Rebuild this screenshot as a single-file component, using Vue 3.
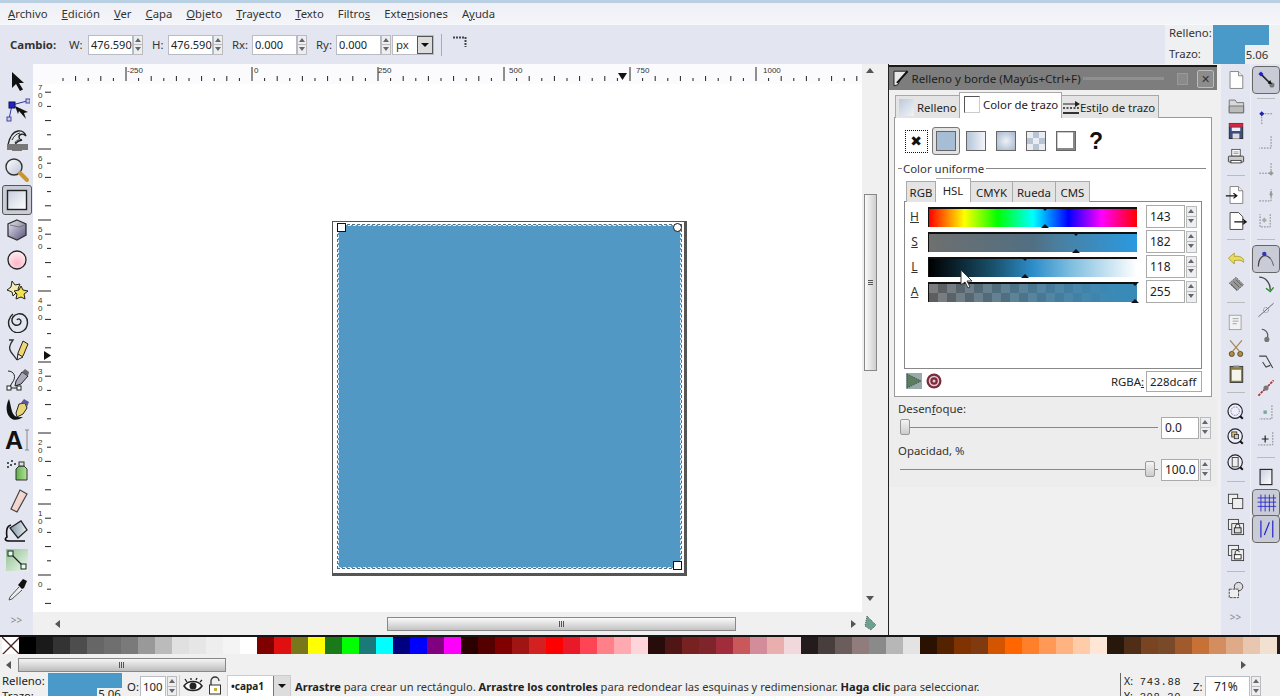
<script setup>
import { computed } from 'vue'

const menus = [
  ['A', 'rchivo'], ['E', 'dición'], ['V', 'er'], ['C', 'apa'], ['O', 'bjeto'],
  ['T', 'rayecto'], ['T', 'exto'], ['Filtro', 's', ''], ['Exte', 'n', 'siones'], ['A', 'y', 'uda'],
]

const fields = [
  { label: 'W:', value: '476.590', cls: 'f-w' },
  { label: 'H:', value: '476.590', cls: 'f-h' },
  { label: 'Rx:', value: '0.000', cls: 'f-rx' },
  { label: 'Ry:', value: '0.000', cls: 'f-ry' },
]

const tools = [
  `<path d="M8 5v16l4-4 4 7 3-1.5-4-6.5h5z" fill="#111"/>`,
  `<path d="M8 8L23 4M8 8L5 22" stroke="#33a" fill="none"/><rect x="5" y="5" width="6" height="6" fill="#22c" stroke="#114"/><rect x="22" y="2" width="4" height="4" fill="#ccd" stroke="#44a"/><rect x="3" y="20" width="4" height="4" fill="#ccd" stroke="#44a"/><path d="M11 9l13 6-4 1 2 6-7-8-1 3z" fill="#111"/>`,
  `<path d="M4 18c1-5 3-13 10-14 4-.6 7 2 8 5-3-3-7-2-7 1 0 2 2 3 3 3-4 1-6 2-7 5z" fill="#e4e6ee" stroke="#222" stroke-width="1.300"/><path d="M8 13c2-4 4-6 8-7M11 16c1-2 2-3 4-3" fill="none" stroke="#222"/><rect x="3" y="17" width="21" height="6" fill="#777"/><rect x="8" y="22" width="10" height="2" fill="#777"/>`,
  `<circle cx="10" cy="10" r="8" fill="url(#gGlass)" stroke="#333" stroke-width="1.4"/><path d="M16 16l7 7" stroke="#c9962e" stroke-width="4" stroke-linecap="round"/>`,
  `<rect x="3.5" y="3.5" width="19" height="19" fill="url(#gRect)" stroke="#222" stroke-width="1.4"/>`,
  `<path d="M13 3l9 4v11l-9 5-9-4V7z" fill="url(#gBox)" stroke="#333" stroke-width="1.3"/><path d="M6 8l9 2 6-2" fill="none" stroke="#777"/>`,
  `<circle cx="13" cy="13" r="9" fill="url(#gPink)" stroke="#222" stroke-width="1.3"/>`,
  `<path d="M8 4l3 4 5-1-2 5 3 4-5 0-3 3-1-4-5-2 4-3z" fill="#f3ecb0" stroke="#222"/><path d="M17 9l2 4 5 1-4 3 1 5-4-2-5 2 1-5-3-3 5-1z" fill="#f4e04a" stroke="#222"/>`,
  `<path d="M13 13c1-2 4-1 4 1.500s-3 4.500-6 3.500-4-5-2-8 8-5 12-1 3 12-2 15-10 2-13-3-1-11 3-14" fill="none" stroke="#222" stroke-width="1.400"/>`,
  `<path d="M5 3h4c-3 4-5 8-2 12s5 6 6 8" fill="none" stroke="#333" stroke-width="1.300"/><path d="M14 16l5-12 5 3-5 12-5 3z" fill="#f0d870" stroke="#222"/><path d="M13 23l1-6 5 3z" fill="#eee" stroke="#222"/>`,
  `<path d="M4 4c6 0 9 6 4 12l-3 5h9" fill="none" stroke="#222"/><rect x="3" y="19" width="4" height="4" fill="#fff" stroke="#222"/><rect x="13" y="19" width="4" height="4" fill="#fff" stroke="#222"/><path d="M12 14l6-9 6 4-7 8-6 2z" fill="#aab" stroke="#222"/><path d="M18 5l6 4 1-4-4-3z" fill="#666"/>`,
  `<path d="M5 2c-4 7-3 17 3 20 4 2 8 0 11-2-3 0-7 1-9-2-3-4-3-10-5-16z" fill="#111"/><path d="M12 16l3-9 6-1 2 5-4 6-6 3z" fill="#e8d676" stroke="#222"/><path d="M16 7l5-1 2 4 2-5-5-3z" fill="#5a5a9a"/>`,
  `<text x="1" y="22" font-size="25" font-weight="700" fill="#111" font-family="Liberation Sans">A</text><path d="M21 3h4M23 3v20M21 23h4" stroke="#888" fill="none"/>`,
  `<g fill="#222"><circle cx="4" cy="6" r="1"/><circle cx="8" cy="4" r="1"/><circle cx="7" cy="8" r="1"/><circle cx="11" cy="7" r="1"/><circle cx="4" cy="10" r="1"/></g><path d="M12 23V12l3-3h5l3 3v11z" fill="url(#gGreen)" stroke="#333"/><rect x="15" y="5" width="5" height="4" fill="#ddd" stroke="#333"/>`,
  `<path d="M7 22L16 3l7 4-10 18z" fill="url(#gErase)" stroke="#444" stroke-width="1.2"/>`,
  `<path d="M7 8C2 9 2 14 3 20c-3 2-2 4 3 4h15" fill="none" stroke="#111" stroke-width="1.600"/><path d="M6 11l11-7 6 9-9 8z" fill="url(#gBucket)" stroke="#222" stroke-width="1.300"/>`,
  `<rect x="2" y="2" width="22" height="22" fill="url(#gGrad)"/><path d="M7 7l12 12" stroke="#222" stroke-width="1.3"/><rect x="4" y="4" width="5" height="5" fill="#dfe" stroke="#222"/><rect x="17" y="17" width="5" height="5" fill="#dfe" stroke="#222"/>`,
  `<path d="M15 10l-9 10-1 3 3-1 10-9" fill="#eee" stroke="#555"/><path d="M14 8l5-6 4 2-3 7-2 1z" fill="#111"/>`,
]

const sep = null
const doc = `<path d="M6 3h10l5 5v15H6z" fill="#fff" stroke="#777"/><path d="M16 3v5h5" fill="#eee" stroke="#777"/>`
const zoomBase = `<circle cx="12" cy="12" r="8.5" fill="#eef" stroke="#222" stroke-width="1.4"/><path d="M18 18l3 3" stroke="#111" stroke-width="2.4"/>`
const col1 = [
  doc,
  `<path d="M5 6h7l2 3h8v12H5z" fill="#d8d8d8" stroke="#666"/><path d="M5 13h17v8H5z" fill="#bbb" stroke="#666"/>`,
  `<rect x="5" y="4" width="16" height="18" fill="#3d4f80" stroke="#222"/><rect x="5" y="4" width="16" height="4" fill="#d9243c"/><rect x="8" y="9" width="10" height="4" fill="#eef"/><rect x="9" y="16" width="8" height="6" fill="#ddd"/>`,
  `<rect x="8" y="4" width="10" height="8" fill="#fff" stroke="#444"/><path d="M10 7h6M10 9h6" stroke="#888"/><rect x="4" y="12" width="18" height="7" rx="1" fill="#ccc" stroke="#333"/><rect x="7" y="17" width="12" height="3" fill="#fff" stroke="#333"/>`,
  sep,
  doc + `<path d="M1 14h12M10 11l4 3-4 3" fill="none" stroke="#111" stroke-width="1.4"/>`,
  `<path d="M6 3h10l5 5v15H6z" fill="#fff" stroke="#333"/><path d="M11 14h13M21 11l4 3-4 3" fill="none" stroke="#111" stroke-width="1.4"/>`,
  sep,
  `<path d="M4 12l7-6v4c6-1 12 1 11 7-2-3-6-3-11-2v4z" fill="#e9dc5c" stroke="#aa9a30"/>`,
  `<path d="M5 12l8-7 9 9-8 7z" fill="#999" stroke="#666" stroke-dasharray="2 1"/><path d="M7 13l7 7M10 10l7 7M13 8l7 7" stroke="#555"/>`,
  sep,
  `<rect x="5" y="5" width="14" height="17" fill="#f1f2f4" stroke="#999"/><path d="M9 9h7M9 12h7M9 15h5" stroke="#999"/>`,
  `<circle cx="8" cy="20" r="3" fill="#b38d3a" stroke="#443"/><circle cx="18" cy="20" r="3" fill="#b38d3a" stroke="#443"/><path d="M9 17L20 4M17 17L6 4" stroke="#a85" stroke-width="1.5"/>`,
  `<rect x="6" y="4" width="15" height="19" fill="#8a7a40" stroke="#333"/><rect x="8" y="8" width="11" height="13" fill="#f5f5ea"/><rect x="10" y="3" width="7" height="3" fill="#888"/>`,
  sep,
  zoomBase + `<circle cx="12" cy="12" r="5" fill="none" stroke="#555" stroke-dasharray="1 1"/>`,
  zoomBase + `<rect x="8" y="7" width="6" height="6" fill="#ddc070" stroke="#333"/><rect x="11" y="10" width="5" height="5" fill="#ccc" stroke="#333"/>`,
  zoomBase + `<rect x="8.5" y="6.5" width="7" height="11" fill="#eee" stroke="#333"/>`,
  sep,
  `<rect x="4" y="5" width="11" height="11" fill="#eee" stroke="#333"/><rect x="9" y="10" width="12" height="12" fill="#eee" stroke="#333"/>`,
  `<rect x="4" y="4" width="12" height="12" fill="#eee" stroke="#333"/><rect x="8" y="9" width="14" height="13" fill="#eee" stroke="#333"/><rect x="11" y="14" width="8" height="6" fill="#ddd" stroke="#111"/><path d="M12.5 14v-2a2.5 2.5 0 015 0v2" fill="none" stroke="#111"/>`,
  `<rect x="4" y="4" width="12" height="12" fill="#eee" stroke="#333"/><rect x="8" y="9" width="14" height="13" fill="#eee" stroke="#333"/><rect x="11" y="15" width="8" height="5" fill="#fff" stroke="#111"/><path d="M12 15v-2a2.5 2.5 0 015-1" fill="none" stroke="#111"/>`,
  sep,
  `<circle cx="16" cy="9" r="5" fill="#ddd" stroke="#333"/><rect x="5" y="12" width="11" height="10" fill="#eee" stroke="#333" stroke-dasharray="3 1"/>`,
]

const dash = 'fill="none" stroke="#777" stroke-dasharray="2 1.4"'
const col2 = [
  { b: `<path d="M7 6l12 12" stroke="#222" stroke-width="2"/><path d="M4 6l3-3 3 3-3 3z" fill="#22c"/><circle cx="20" cy="19" r="3" fill="#777"/><path d="M15 17l5 1-2-5z" fill="#111"/>`, on: true },
  sep,
  { b: `<path d="M8 8h13M8 8v13" ${dash}/><path d="M5 8l3-3 3 3-3 3z" fill="#22a"/>` },
  { b: `<path d="M19 5v14H5" ${dash}/>` },
  { b: `<path d="M5 18h14V6" ${dash}/><path d="M16 18l3-3 3 3-3 3z" fill="#999"/>` },
  { b: `<path d="M5 20h14V6" ${dash}/><path d="M17 12l2-4 2 4-2 4z" fill="#999"/>` },
  { b: `<path d="M18 5v15H6V5" ${dash}/><path d="M8 12l3-3 3 3-3 3z" fill="#aaa"/>` },
  sep,
  { b: `<path d="M4 22C4 12 10 5 18 12" fill="none" stroke="#444" stroke-width="1.5"/><circle cx="11" cy="7" r="2.6" fill="#33b"/><path d="M18 12c3 4 3 7 4 9" stroke="#444" fill="none"/>`, on: true },
  { b: `<path d="M5 5c7 0 13 6 13 15" fill="none" stroke="#444" stroke-width="1.5"/><path d="M13 18l5 4 4-5" fill="none" stroke="#2a8a2a" stroke-width="1.6"/>` },
  { b: `<path d="M4 21L22 5" stroke="#555"/><circle cx="13" cy="13" r="3" fill="none" stroke="#555" stroke-dasharray="1 1"/>` },
  { b: `<path d="M8 5c8 1 9 10 4 14" fill="none" stroke="#555" stroke-width="1.4"/><circle cx="14" cy="17" r="3" fill="#777"/>` },
  { b: `<path d="M5 6h8l8 14M9 13l4 6 5-2" fill="none" stroke="#444" stroke-width="1.3"/>` },
  { b: `<path d="M4 22L22 4" stroke="#a33" stroke-dasharray="3 1" stroke-width="2"/><circle cx="13" cy="13" r="3" fill="#777"/>` },
  { b: `<path d="M20 4v16H5" ${dash}/><rect x="10" y="10" width="4" height="4" fill="#7a9"/>` },
  { b: `<path d="M8 13h8M12 9v8" stroke="#222" stroke-width="1.4"/><path d="M21 5v15H4" ${dash}/>` },
  sep,
  { b: `<rect x="6" y="4" width="14" height="18" fill="url(#gRect)" stroke="#222" stroke-width="1.3"/>` },
  { b: `<path d="M7 3v20M12 3v20M17 3v20M22 3v20M3 7h22M3 12h22M3 17h22" stroke="#22c"/>`, on: true },
  { b: `<path d="M7 3v20M21 3v20M11 20L17 5" stroke="#22c" stroke-width="1.4"/>`, on: true },
]

const palette = [
  '#000', '#1a1a1a', '#333', '#4d4d4d', '#666', '#6f6f6f', '#7a7a7a', '#999', '#bbb', '#e0e0e0', '#e6e6e6', '#eee', '#f4f4f4', '#fff',
  '#800000', '#e01010', '#78781a', '#ff0', '#1a7a1a', '#0f0', '#1a7a7a', '#0ff', '#000080', '#00f', '#800080', '#f0f',
  '#2b0000', '#550000', '#800000', '#a01414', '#d42020', '#f00', '#e81a2a', '#ff4455', '#ff8088', '#ffaab0', '#ffd5dc',
  '#280b0b', '#501616', '#782121', '#80242c', '#a02c3c', '#c8585a', '#d38d9a', '#e9afaf', '#f0d8dc',
  '#241c1c', '#483e3e', '#6c5d5d', '#917c7c', '#8a8a8a', '#b7b7b7', '#e3e3e3',
  '#2b1100', '#552200', '#803300', '#803a10', '#d45500', '#f60', '#ff7f2a', '#f95', '#ffb380', '#fca', '#ffe6d5',
  '#28170b', '#502d16', '#784421', '#784a2a', '#a05a2c', '#c87137', '#d38d5f', '#deaa87', '#e9c6af', '#f2e0d0',
]

const channels = [
  { key: 'H', value: 143, cls: 'bar-h', mark: 116 },
  { key: 'S', value: 182, cls: 'bar-s', mark: 147 },
  { key: 'L', value: 118, cls: 'bar-l', mark: 96 },
  { key: 'A', value: 255, cls: 'bar-a', mark: 206 },
]

const colorTabs = ['RGB', 'HSL', 'CMYK', 'Rueda', 'CMS']

const hTicks = computed(() => {
  const out = []
  for (let i = -15; i <= 48; i++) {
    const x = 252 - 33 + i * 12.6
    const m = ((i % 10) + 10) % 10
    out.push({ x, y: m === 0 ? 3 : m % 2 === 1 ? 14 : 12 })
  }
  return out
})
const hLabels = [['-250', 125], ['0', 252], ['250', 376], ['500', 507], ['750', 634], ['1000', 761]]

const vTicks = computed(() => {
  const out = []
  for (let i = -3; i <= 36; i++) {
    const y = 575 - 84 - i * 14.2
    out.push({ y, x: i % 5 === 0 ? 5 : i % 2 === 0 ? 12 : 14 })
  }
  return out
})
const vLabels = [['0', 575], ['100', 504], ['200', 433], ['300', 362], ['400', 291], ['500', 220], ['600', 149], ['700', 78]]
</script>

<template>
  <div class="app">
    <svg class="defs" width="0" height="0">
      <defs>
        <linearGradient id="gGlass" x1="0" y1="0" x2="1" y2="1"><stop offset="0" stop-color="#fff"/><stop offset="1" stop-color="#b8c2d6"/></linearGradient>
        <linearGradient id="gRect" x1="0" y1="0" x2="1" y2="1"><stop offset="0" stop-color="#c6cedd"/><stop offset="1" stop-color="#fff"/></linearGradient>
        <linearGradient id="gBox" x1="0" y1="0" x2="1" y2="1"><stop offset="0" stop-color="#ececf4"/><stop offset="1" stop-color="#55507a"/></linearGradient>
        <radialGradient id="gPink" cx=".5" cy=".7" r=".7"><stop offset="0" stop-color="#ffb4c8"/><stop offset="1" stop-color="#fdf0f4"/></radialGradient>
        <linearGradient id="gGreen" x1="0" y1="0" x2="1" y2="0"><stop offset="0" stop-color="#5db04a"/><stop offset="1" stop-color="#b7e09a"/></linearGradient>
        <linearGradient id="gErase" x1="0" y1="0" x2="1" y2="1"><stop offset="0" stop-color="#f4e8e4"/><stop offset="1" stop-color="#f0c4bc"/></linearGradient>
        <linearGradient id="gBucket" x1="0" y1="0" x2="1" y2="0"><stop offset="0" stop-color="#7f95a3"/><stop offset="1" stop-color="#e8eef2"/></linearGradient>
        <linearGradient id="gGrad" x1="0" y1="0" x2="1" y2="1"><stop offset="0" stop-color="#8fc08f"/><stop offset="1" stop-color="#eef7ee"/></linearGradient>
      </defs>
    </svg>

    <div class="titlestrip" />

    <nav class="menubar">
      <span v-for="m in menus" :key="m.join('')">
        <template v-if="m.length === 2"><u>{{ m[0] }}</u>{{ m[1] }}</template>
        <template v-else>{{ m[0] }}<u>{{ m[1] }}</u>{{ m[2] }}</template>
      </span>
    </nav>

    <div class="controls">
      <strong class="cambio">Cambio:</strong>
      <div v-for="f in fields" :key="f.label" class="field" :class="f.cls">
        <label>{{ f.label }}</label>
        <span class="input">{{ f.value }}</span>
        <span class="spin"><i class="up" /><i class="down" /></span>
      </div>
      <div class="combo"><span>px</span><b class="combo-btn"><i class="tri" /></b></div>
      <span class="vsep" />
      <svg class="corner" width="16" height="12" viewBox="0 0 16 12"><path d="M1 1.500h12M13.500 1v10" stroke="#444" stroke-width="2" stroke-dasharray="2 1" fill="none"/></svg>
      <div class="selstyle">
        <div class="selstyle-labels"><span>Relleno:</span><span>Trazo:</span></div>
        <div class="selstyle-swatch"><span>5.06</span></div>
      </div>
    </div>

    <div class="main">
      <aside class="lefttools">
        <button v-for="(t, i) in tools" :key="i" class="tool" :class="{ on: i === 4 }" type="button">
          <svg width="26" height="26" viewBox="0 0 26 26" v-html="t" />
        </button>
        <span class="more">&gt;&gt;</span>
      </aside>

      <section class="canvas">
        <svg class="ruler-h" width="829" height="20">
          <line v-for="t in hTicks" :key="t.x" :x1="t.x" :x2="t.x" :y1="t.y" y2="17" stroke="#222" />
          <text v-for="l in hLabels" :key="l[0]" :x="l[1] - 33 + 2" y="9" class="rtext">{{ l[0] }}</text>
          <path d="M585 9h9l-4.500 7z" fill="#111" />
        </svg>
        <svg class="ruler-v" width="19" height="528">
          <line v-for="t in vTicks" :key="t.y" :x1="t.x" x2="18" :y1="t.y" :y2="t.y" stroke="#222" />
          <g v-for="l in vLabels" :key="l[0]">
            <text v-for="(d, i) in l[0]" :key="i" x="5" :y="l[1] - 84 + 12 + i * 8.4" class="rtext">{{ d }}</text>
          </g>
          <path d="M11 267l7 4.500-7 4.500z" fill="#111" />
        </svg>
        <div class="drawing">
          <div class="page">
            <div class="shape"><div class="ants" /></div>
            <i class="handle h-tl" />
            <i class="handle h-tr" />
            <i class="handle h-br" />
          </div>
        </div>
        <div class="vscroll">
          <i class="arr arr-up" />
          <div class="thumb-v" />
          <i class="arr arr-down" />
        </div>
        <div class="hscroll">
          <i class="arr arr-left" />
          <div class="thumb-h" />
          <i class="arr arr-right" />
        </div>
        <div class="cms">
          <svg width="16" height="16" viewBox="0 0 16 16"><path d="M5 1l9 9-5 5-6-4z" fill="#6f9f8f" stroke="#4a6a5a" stroke-dasharray="1 1"/></svg>
        </div>
      </section>

      <section class="dock">
        <header class="dock-title">
          <svg width="17" height="17" viewBox="0 0 17 17"><path d="M1 1h14L8 9l-3 6-4 1z" fill="#e8e8e8" stroke="#222"/><path d="M15 1L6 11l-2 2" stroke="#111" stroke-width="2"/></svg>
          <span class="dock-name">Relleno y borde (Mayús+Ctrl+F)</span>
          <span class="dock-grip" />
          <span class="dock-min"><i /></span>
          <span class="dock-close">✕</span>
        </header>
        <div class="tabs">
          <span class="tab t-fill"><i class="tab-swatch" /><span>Relleno</span></span>
          <span class="tab t-stroke active"><i class="tab-empty" /><span>Color de <u>t</u>razo</span></span>
          <span class="tab t-style">
            <svg width="17" height="18" viewBox="0 0 17 18"><path d="M0 6h13" stroke="#222"/><path d="M12 3l5 3-5 3z" fill="#222"/><path d="M0 10h16" stroke="#222" stroke-width="1.400" stroke-dasharray="2 1.500"/><path d="M0 15h16" stroke="#333" stroke-width="2"/></svg>
            <span>Esti<u>l</u>o de trazo</span>
          </span>
        </div>
        <div class="panel">
          <div class="paint-row">
            <span class="paint"><b class="p-x">✖</b></span>
            <span class="paint sel"><i class="sw sw-flat" /></span>
            <span class="paint"><i class="sw sw-linear" /></span>
            <span class="paint"><i class="sw sw-radial" /></span>
            <span class="paint"><i class="sw sw-pattern" /></span>
            <span class="paint"><i class="sw sw-swatch" /></span>
            <span class="paint p-q">?</span>
          </div>
          <div class="legend"><span>Color uniforme</span></div>
          <div class="color-tabs">
            <span v-for="t in colorTabs" :key="t" class="ctab" :class="{ active: t === 'HSL' }">{{ t }}</span>
          </div>
          <div class="sliders">
            <div v-for="c in channels" :key="c.key" class="chan">
              <u class="chan-key">{{ c.key }}</u>
              <div class="bar" :class="c.cls">
                <i class="mk mk-t" :style="{ left: c.mark + 'px' }" />
                <i class="mk mk-b" :style="{ left: c.mark + 'px' }" />
                <svg v-if="c.key === 'L'" class="pointer" width="14" height="20" viewBox="0 0 14 20"><path d="M1 1v15l4-3 3 6 2-1-3-6h5z" fill="#fff" stroke="#333"/></svg>
              </div>
              <span class="input num">{{ c.value }}</span>
              <span class="spin"><i class="up" /><i class="down" /></span>
            </div>
          </div>
          <div class="rgba-row">
            <svg width="16" height="16" viewBox="0 0 16 16"><rect width="16" height="16" fill="#9aa"/><path d="M1 1l14 7-14 7z" fill="#5d7d5d" stroke="#345" stroke-dasharray="1 1"/></svg>
            <svg width="16" height="16" viewBox="0 0 16 16"><circle cx="8" cy="8" r="7.500" fill="#7a2b3c"/><circle cx="8" cy="8" r="4.500" fill="none" stroke="#e8c8d0" stroke-width="1.500"/><circle cx="8" cy="8" r="1.500" fill="#e8c8d0"/></svg>
            <span class="rgba-label">RGBA<u>:</u></span>
            <span class="input rgba-val">228dcaff</span>
          </div>
        </div>

        <div class="blur">
          <p>Desen<u>f</u>oque:</p>
          <div class="range-row">
            <div class="range"><i class="knob" /></div>
            <span class="input r-num">0.0</span>
            <span class="spin"><i class="up" /><i class="down" /></span>
          </div>
          <p>Opacidad, %</p>
          <div class="range-row">
            <div class="range end"><i class="knob" /></div>
            <span class="input r-num">100.0</span>
            <span class="spin"><i class="up" /><i class="down" /></span>
          </div>
        </div>
      </section>

      <aside class="righttools">
        <div class="rcol">
          <template v-for="(ic, i) in col1" :key="i">
            <span v-if="!ic" class="rsep" />
            <span v-else class="ricon"><svg width="26" height="26" viewBox="0 0 26 26" v-html="ic" /></span>
          </template>
          <span class="more">&gt;&gt;</span>
        </div>
        <div class="rcol">
          <template v-for="(ic, i) in col2" :key="i">
            <span v-if="!ic" class="rsep" />
            <span v-else class="ricon" :class="{ on: ic.on }"><svg width="26" height="26" viewBox="0 0 26 26" v-html="ic.b" /></span>
          </template>
        </div>
      </aside>
    </div>

    <div class="palette">
      <span class="none"><svg width="18" height="18" viewBox="0 0 18 18"><path d="M0 0l18 18M18 0L0 18" stroke="#4a2020" stroke-width="1.300"/></svg></span>
      <i v-for="(c, i) in palette" :key="i" class="swatch" :style="{ background: c }" />
      <i class="swatch last" />
      <i class="arr arr-left pal-arr" />
    </div>

    <div class="pal-scroll">
      <i class="arr arr-left" />
      <div class="thumb-p" />
      <i class="arr arr-right pal-right" />
    </div>

    <footer class="status">
      <div class="st-labels"><span>Relleno:</span><span>Trazo:</span></div>
      <div class="st-swatch"><span>5.06</span></div>
      <label class="st-o">O:</label>
      <span class="input st-oval">100</span>
      <span class="spin"><i class="up" /><i class="down" /></span>
      <span class="st-sep" />
      <svg class="st-eye" width="20" height="18" viewBox="0 0 20 18"><path d="M1 9c4-6 14-6 18 0-4 6-14 6-18 0z" fill="#fff" stroke="#222" stroke-width="1.500"/><circle cx="10" cy="9" r="3.500" fill="#222"/><path d="M4 5L2 2M8 3V1M13 3l1-2M17 5l2-2" stroke="#222" stroke-width="1.300"/></svg>
      <svg class="st-lock" width="14" height="20" viewBox="0 0 14 20"><path d="M3 9V5a4 4 0 018 0" fill="none" stroke="#333" stroke-width="1.300"/><rect x="1.500" y="9" width="11" height="9" fill="#fff" stroke="#333"/><rect x="6" y="12" width="3" height="3" fill="#c9b030"/></svg>
      <div class="st-layer"><span>•capa1</span><b class="st-layer-btn"><i class="tri" /></b></div>
      <p class="st-msg"><b>Arrastre</b> para crear un rectángulo. <b>Arrastre los controles</b> para redondear las esquinas y redimensionar. <b>Haga clic</b> para seleccionar.</p>
      <div class="st-coords">
        <span><em>X:</em>  743.88</span>
        <span><em>Y:</em>  308.30</span>
      </div>
      <label class="st-z">Z:</label>
      <span class="input st-zval">71%</span>
      <span class="spin"><i class="up" /><i class="down" /></span>
    </footer>
  </div>
</template>

<style>
html, body { margin: 0; background: #f0f0f0; }
</style>

<style scoped>
.app {
  width: 1280px;
  height: 696px;
  overflow: hidden;
  display: flex;
  flex-direction: column;
  position: relative;
  background: #f0f0f0;
  color: #222;
  font-family: "Noto Sans", "Open Sans", sans-serif;
  font-size: 11.400px;
}
.defs { position: absolute; }
i { display: block; font-style: normal; }

.titlestrip { height: 3px; background: #b9d0e2; flex: none; }
.menubar {
  height: 21px;
  flex: none;
  display: flex;
  align-items: center;
  gap: 14px;
  padding-left: 8px;
  background: linear-gradient(#eef0f5, #f3f5f9);
  font-size: 11.300px;
  color: #333;
}

.controls {
  height: 40px;
  flex: none;
  display: flex;
  align-items: center;
  background: #e3e6f0;
  border-top: 1px solid #f7f8fb;
  box-sizing: border-box;
  padding-left: 10px;
  color: #333;
}
.cambio { width: 59px; }
.field { display: flex; align-items: center; }
.field label { flex: none; }
.f-w label { width: 19px; }
.f-h label { width: 16px; }
.f-rx label, .f-ry label { width: 20px; }
.field .spin { margin-right: 9px; }
.f-ry .spin { margin-right: 1px; }
.input {
  display: flex;
  align-items: center;
  background: #fff;
  border: 1px solid #b9bcc4;
  box-sizing: border-box;
  padding-left: 3px;
  color: #222;
  white-space: nowrap;
}
.field .input { height: 20px; width: 45px; font-size: 11px; padding-left: 2px; }
.spin {
  width: 10px;
  height: 20px;
  flex: none;
  display: flex;
  flex-direction: column;
  box-sizing: border-box;
  border: 1px solid #bbb;
  background: #eceef2;
}
.spin i { flex: 1; position: relative; }
.spin i::after {
  content: "";
  position: absolute;
  left: 1px;
  top: 2px;
  border: 3px solid transparent;
  border-top: 0;
  border-bottom: 4px solid #666;
}
.spin .down { border-top: 1px solid #bbb; }
.spin .down::after { border-bottom: 0; border-top: 4px solid #666; }

.combo {
  width: 42px;
  height: 20px;
  display: flex;
  align-items: center;
  justify-content: space-between;
  background: #fff;
  border: 1px solid #b9bcc4;
  box-sizing: border-box;
  padding-left: 3px;
}
.combo-btn {
  width: 16px;
  height: 18px;
  display: flex;
  align-items: center;
  justify-content: center;
  background: #dcdcdc;
  border: 1px solid #555;
  box-sizing: border-box;
}
.tri { border: 4px solid transparent; border-top: 4px solid #111; border-bottom: 0; }
.vsep { width: 1px; height: 22px; background: #aab; margin: 0 10px 0 7px; }
.corner { margin-top: -6px; }
.selstyle { margin-left: auto; height: 39px; display: flex; width: 115px; background: #eff0f2; }
.selstyle-labels {
  width: 48px;
  padding: 0 0 0 4px;
  box-sizing: border-box;
  display: flex;
  flex-direction: column;
  gap: 6px;
  color: #333;
  line-height: 15px;
}
.selstyle-swatch { width: 56px; background: #4a9ac9; position: relative; }
.selstyle-swatch span {
  position: absolute;
  right: 0;
  bottom: 0;
  width: 24px;
  height: 19px;
  background: #eee;
  text-align: center;
  line-height: 19px;
}

.main { height: 571px; flex: none; display: flex; }
.lefttools {
  width: 33px;
  flex: none;
  padding-top: 1px;
  background: #e3e6f0;
  display: flex;
  flex-direction: column;
  align-items: center;
}
.tool {
  width: 30px;
  height: 30px;
  flex: none;
  padding: 0;
  border: 0;
  background: none;
  display: flex;
  align-items: center;
  justify-content: center;
}
.tool.on { border: 1px solid #555; border-radius: 3px; background: #c9ccd6; }
.more { color: #888; font-size: 10px; height: 30px; line-height: 30px; text-align: center; display: block; }

.canvas {
  width: 855px;
  flex: none;
  display: grid;
  grid-template-columns: 19px 810px 26px;
  grid-template-rows: 20px 528px 23px;
  background: #f0f0f0;
}
.ruler-h { grid-column: 1 / span 2; grid-row: 1; background: #fbfbfd; }
.ruler-v { grid-column: 1; grid-row: 2; background: #fff; }
.rtext { font-size: 8px; font-family: "Liberation Sans", sans-serif; fill: #333; }
.drawing { grid-column: 2; grid-row: 2; background: #fff; position: relative; overflow: hidden; }
.page {
  position: absolute;
  left: 280px;
  top: 137px;
  width: 355px;
  height: 355px;
  box-sizing: border-box;
  background: #fff;
  border: 1px solid #555;
  border-right-width: 3px;
  border-bottom-width: 3px;
}
.shape {
  position: absolute;
  left: 5px;
  top: 3px;
  width: 343px;
  height: 343px;
  box-sizing: border-box;
  background: #5199c4;
}
.ants { position: absolute; inset: 0; border: 1px dashed #dfeaf2; outline: 1px dashed #4a6f88; }
.handle {
  position: absolute;
  width: 7px;
  height: 7px;
  background: #fff;
  border: 1px solid #111;
}
.h-tl { left: 3.500px; top: 1px; }
.h-tr { left: 340px; top: 1px; border-radius: 50%; }
.h-br { left: 340px; top: 339px; }

.vscroll {
  grid-column: 3;
  grid-row: 1 / span 2;
  display: flex;
  flex-direction: column;
  align-items: center;
  padding: 4px 10px 0 0;
  background: #f0f0f0;
}
.thumb-v {
  width: 13px;
  height: 177px;
  margin-top: 121px;
  margin-bottom: 225px;
  border: 1px solid #888;
  box-sizing: border-box;
  background: linear-gradient(90deg, #fafafa, #cfcfcf);
  position: relative;
  flex: none;
}
.thumb-v::after {
  content: "";
  position: absolute;
  left: 3px;
  right: 3px;
  top: 85px;
  height: 5px;
  background: repeating-linear-gradient(#555 0 1px, transparent 1px 2px);
}
.arr { width: 0; height: 0; border: 4px solid transparent; flex: none; }
.arr-up { border-top: 0; border-bottom: 5px solid #555; }
.arr-down { border-bottom: 0; border-top: 5px solid #555; }
.arr-left { border-left: 0; border-right: 5px solid #555; }
.arr-right { border-right: 0; border-left: 5px solid #555; }
.hscroll {
  grid-column: 1 / span 2;
  grid-row: 3;
  display: flex;
  align-items: center;
  padding-left: 22px;
  background: #f0f0f0;
  height: 23px;
}
.thumb-h {
  width: 349px;
  height: 14px;
  margin: 0 115px 0 327px;
  border: 1px solid #888;
  box-sizing: border-box;
  background: linear-gradient(#fafafa, #c4c4c4);
  position: relative;
  flex: none;
}
.thumb-h::after,
.thumb-p::after {
  content: "";
  position: absolute;
  top: 3px;
  bottom: 3px;
  left: calc(50% - 3px);
  width: 6px;
  background: repeating-linear-gradient(90deg, #555 0 1px, transparent 1px 2px);
}
.cms { grid-column: 3; grid-row: 3; padding: 3px 0 0 0; }

.dock {
  width: 329px;
  flex: none;
  border-left: 1px solid #222;
  box-sizing: border-box;
  background: #f0f0f0;
}
.dock-title {
  height: 25px;
  margin-top: 1px;
  border-top: 2px solid #1a1a1a;
  box-sizing: border-box;
  background: #7d7d7d;
  display: flex;
  align-items: center;
  padding: 0 3px 0 4px;
}
.dock-name { margin-left: 2px; width: 176px; font-size: 11.600px; color: #1e1e1e; white-space: nowrap; }
.dock-grip { width: 83px; height: 3px; background: #909090; margin-left: 1px; }
.dock-min { width: 12px; height: 12px; border: 1px solid #999; box-sizing: border-box; margin-left: 13px; background: #8a8a8a; }
.dock-close {
  width: 17px;
  height: 18px;
  margin-left: 9px;
  border: 1px solid #bbb;
  border-radius: 2px;
  box-sizing: border-box;
  background: #8c8c8c;
  color: #333;
  font-size: 11px;
  line-height: 16px;
  text-align: center;
}
.tabs {
  height: 28px;
  padding-left: 6px;
  display: flex;
  align-items: flex-end;
  margin-bottom: -1px;
  position: relative;
  z-index: 1;
}
.tab {
  height: 23px;
  display: flex;
  align-items: center;
  box-sizing: border-box;
  border: 1px solid #a8a8a8;
  border-bottom: 0;
  background: #e4e4e4;
  white-space: nowrap;
  color: #222;
  font-size: 11.400px;
}
.t-fill { width: 64px; border-right: 0; padding-left: 3px; }
.t-stroke { width: 103px; padding-left: 4px; }
.t-stroke.active { height: 26px; background: #fff; padding-bottom: 2px; }
.t-style { width: 97px; border-left: 0; padding-left: 1px; }
.tab-swatch { width: 15px; height: 17px; margin-right: 3px; background: linear-gradient(135deg, #bcc9dc, #f2f4f8); flex: none; }
.tab-empty { width: 14px; height: 15px; margin-right: 3px; border: 1px solid #555; border-right-color: #ccc; border-bottom-color: #ccc; background: #fff; flex: none; }

.panel {
  margin-left: 5px;
  width: 318px;
  height: 280px;
  border: 1px solid #999;
  box-sizing: border-box;
  background: #fff;
  position: relative;
}
.paint-row { display: flex; padding: 11px 0 0 6px; height: 24px; }
.paint {
  width: 30px;
  height: 24px;
  flex: none;
  display: flex;
  align-items: center;
  justify-content: center;
}
.paint.sel { position: relative; }
.paint.sel::before {
  content: "";
  position: absolute;
  inset: -2px 1px;
  border: 1px solid #777;
  border-radius: 3px;
  background: #e2e2e2;
}
.p-x {
  width: 23px;
  height: 23px;
  border: 1px dotted #111;
  box-sizing: border-box;
  font-size: 14px;
  line-height: 21px;
  text-align: center;
  color: #111;
  font-family: "DejaVu Sans", sans-serif;
}
.p-q { font: 700 23px "Liberation Sans", sans-serif; color: #111; }
.sw { width: 20px; height: 20px; border: 1px solid #666; box-sizing: border-box; position: relative; }
.sw-flat { background: #a7bdd6; }
.sw-linear { background: linear-gradient(90deg, #b3c4da, #f3f5f8); }
.sw-radial { background: radial-gradient(circle, #eef2f7, #a5b6cc); }
.sw-pattern { background: repeating-conic-gradient(#b8c4d4 0 25%, #e9edf2 0 50%) 0 0 / 12px 12px; }
.sw-swatch { background: #fff; box-shadow: inset -2px -2px 0 #888, inset 1px 1px 0 #ccc; }

.legend {
  display: flex;
  align-items: center;
  margin: 9px 5px 0 3px;
  height: 13px;
  line-height: 13px;
}
.legend span { padding: 0 1px; color: #333; margin-right: 1px; }
.legend::before { content: ""; width: 4px; height: 1px; background: #888; }
.legend::after { content: ""; flex: 1; height: 1px; background: #888; }

.color-tabs { display: flex; align-items: flex-end; height: 27px; padding-left: 11px; position: relative; z-index: 1; margin-bottom: -1px; }
.ctab {
  width: 42px;
  height: 21px;
  display: flex;
  align-items: center;
  justify-content: center;
  box-sizing: border-box;
  border: 1px solid #aaa;
  border-bottom: 0;
  border-left: 0;
  background: #e4e4e4;
}
.ctab:nth-child(1) { width: 30px; border-left: 1px solid #aaa; }
.ctab:nth-child(2) { width: 35px; }
.ctab:nth-child(4) { width: 43px; }
.ctab:nth-child(5) { width: 34px; }
.ctab.active { height: 24px; background: #fff; }

.sliders {
  margin: 0 9px;
  height: 168px;
  box-sizing: border-box;
  border: 1px solid #888;
  padding-top: 2px;
}
.chan {
  height: 25px;
  display: flex;
  align-items: center;
}
.chan-key { width: 23px; text-align: center; padding-right: 4px; box-sizing: border-box; font-size: 12px; color: #333; flex: none; }
.bar {
  width: 209px;
  height: 20px;
  flex: none;
  position: relative;
  border-top: 2px solid #111;
  border-left: 1px solid #111;
  box-sizing: border-box;
}
.bar-h { background: linear-gradient(90deg, #f00, #ff0 17%, #0f0 33%, #0ff 50%, #00f 67%, #f0f 83%, #f00); }
.bar-s { background: linear-gradient(90deg, #6f6f6f, #516f83 50%, #4a7fa0 62%, #2a9ae0); }
.bar-l { background: linear-gradient(90deg, #000, #1a5470 32%, #2d8dca 50%, #7dbde0 68%, #fff); }
.bar-a { background: linear-gradient(90deg, transparent, #3a8ab8 90%), repeating-conic-gradient(#5d5d5d 0 25%, #7c7c7c 0 50%) 0 0 / 18px 18px; }
.mk { position: absolute; width: 0; height: 0; border: 4px solid transparent; margin-left: -4px; }
.mk-t { top: -2px; border-top: 4px solid #111; border-bottom: 0; }
.mk-b { bottom: -1px; border-bottom: 4px solid #111; border-top: 0; }
.pointer { position: absolute; left: 31px; top: 10px; z-index: 2; }
.num { width: 39px; height: 23px; margin-left: 9px; padding-left: 3px; font-size: 12px; border-color: #aaa; }
.chan .spin { margin-left: 1px; width: 11px; height: 22px; }

.rgba-row {
  display: flex;
  align-items: center;
  gap: 4px;
  margin: 1px 9px 0 11px;
  height: 22px;
}
.rgba-label { margin-left: auto; margin-right: -2px; }
.rgba-val { width: 56px; height: 21px; border-color: #aaa; }

.blur { padding: 3px 0 0 9px; color: #333; height: 90px; box-sizing: border-box; background: #ededed; }
.blur p { margin: 0; line-height: 16px; height: 15px; padding-top: 1px; }
.range-row { display: flex; align-items: center; height: 23px; margin-bottom: 3px; }
.range { width: 258px; margin-left: 2px; height: 1px; background: #888; position: relative; flex: none; }
.knob {
  position: absolute;
  left: 0;
  top: -8px;
  width: 10px;
  height: 16px;
  box-sizing: border-box;
  border: 1px solid #999;
  border-radius: 2px;
  background: linear-gradient(#f4f4f4, #ccc);
}
.range.end .knob { left: 245px; }
.r-num { width: 38px; height: 22px; margin-left: 3px; border-color: #aaa; color: #222; font-size: 12px; }
.range-row .spin { margin-left: 1px; width: 11px; height: 22px; }

.righttools { flex: 1; display: flex; background: #f0f0f0; padding-left: 3px; }
.rcol {
  width: 30px;
  flex: none;
  background: #e3e6f0;
  display: flex;
  flex-direction: column;
  align-items: center;
  padding-top: 3px;
  border-left: 1px solid #eef0f6;
  box-sizing: border-box;
}
.ricon {
  width: 26px;
  height: 25.800px;
  flex: none;
  display: flex;
  align-items: center;
  justify-content: center;
}
.ricon svg { width: 22px; height: 22px; }
.ricon.on { outline: 1px solid #666; border-radius: 3px; background: #c9ccd6; }
.rsep { height: 12px; width: 18px; flex: none; position: relative; }
.rsep::after { content: ""; position: absolute; left: 0; right: 0; top: 5px; height: 1px; background: #bbb; }
.rcol .more { height: 28px; line-height: 28px; }

.palette {
  height: 21px;
  flex: none;
  display: flex;
  align-items: flex-start;
  padding-left: 2px;
  box-sizing: border-box;
  border-top: 2px solid #161616;
  background: #f0f0f0;
}
.none { width: 17px; height: 17px; background: #fff; overflow: hidden; flex: none; }
.swatch { width: 17px; height: 17px; flex: none; }
.swatch.last { width: 4px; background: #241c1c; }
.pal-arr { margin: 4px 0 0 3px; border-right-color: #111; }

.pal-scroll { height: 17px; flex: none; display: flex; align-items: center; padding-left: 6px; background: #f0f0f0; }
.thumb-p {
  width: 208px;
  height: 14px;
  margin-left: 7px;
  border: 1px solid #888;
  box-sizing: border-box;
  background: linear-gradient(#f5f5f5, #bdbdbd);
  position: relative;
  flex: none;
}
.pal-right { margin-left: 1015px; }

.status {
  height: 23px;
  flex: none;
  display: flex;
  align-items: center;
  padding-top: 3px;
  box-sizing: border-box;
  overflow: hidden;
  background: #f0f0f0;
  color: #222;
}
.st-labels { width: 48px; flex: none; padding: 0 0 0 2px; box-sizing: border-box; display: flex; flex-direction: column; align-self: flex-start; line-height: 15px; margin-top: -3px; }
.st-swatch { width: 74px; height: 23px; flex: none; align-self: flex-end; background: #4a9ac9; position: relative; }
.st-swatch span { position: absolute; right: 0; bottom: 0; width: 25px; height: 8px; background: #f0f0f0; text-align: center; line-height: 12px; overflow: hidden; }
.st-o { margin-left: 5px; width: 13px; flex: none; }
.st-oval { width: 26px; height: 21px; padding-left: 2px; flex: none; }
.status .spin { height: 20px; width: 10px; margin-left: 1px; }
.st-sep { width: 1px; flex: none; height: 23px; background: #ccc; margin: 0 3px 0 2px; }
.st-eye { flex: none; }
.st-lock { flex: none; margin-left: 5px; }
.st-layer {
  width: 64px;
  height: 23px;
  margin-left: 5px;
  flex: none;
  display: flex;
  justify-content: space-between;
  background: #fff;
  border: 1px solid #ccc;
  box-sizing: border-box;
  align-items: center;
  padding-left: 3px;
  font-weight: 700;
  font-size: 10px;
}
.st-layer-btn { width: 16px; height: 21px; border-left: 1px solid #777; display: flex; align-items: center; justify-content: center; background: #ddd; }
.st-msg { margin: 0 0 0 4px; width: 825px; flex: none; white-space: nowrap; color: #333; font-size: 11.100px; }
.st-msg b { color: #222; }
.st-coords {
  width: 73px;
  flex: none;
  height: 28px;
  margin-top: -3px;
  align-self: flex-start;
  border-left: 1px solid #666;
  box-sizing: border-box;
  padding: 1px 0 0 3px;
  display: flex;
  flex-direction: column;
  font-family: "Liberation Mono", monospace;
  font-size: 10.500px;
  letter-spacing: .6px;
  line-height: 14px;
  white-space: pre;
}
.st-coords em { font-style: normal; font-family: "Noto Sans", sans-serif; letter-spacing: 0; }
.st-z { width: 12px; flex: none; }
.st-zval { width: 45px; height: 21px; padding-left: 8px; font-size: 12px; flex: none; }
</style>
